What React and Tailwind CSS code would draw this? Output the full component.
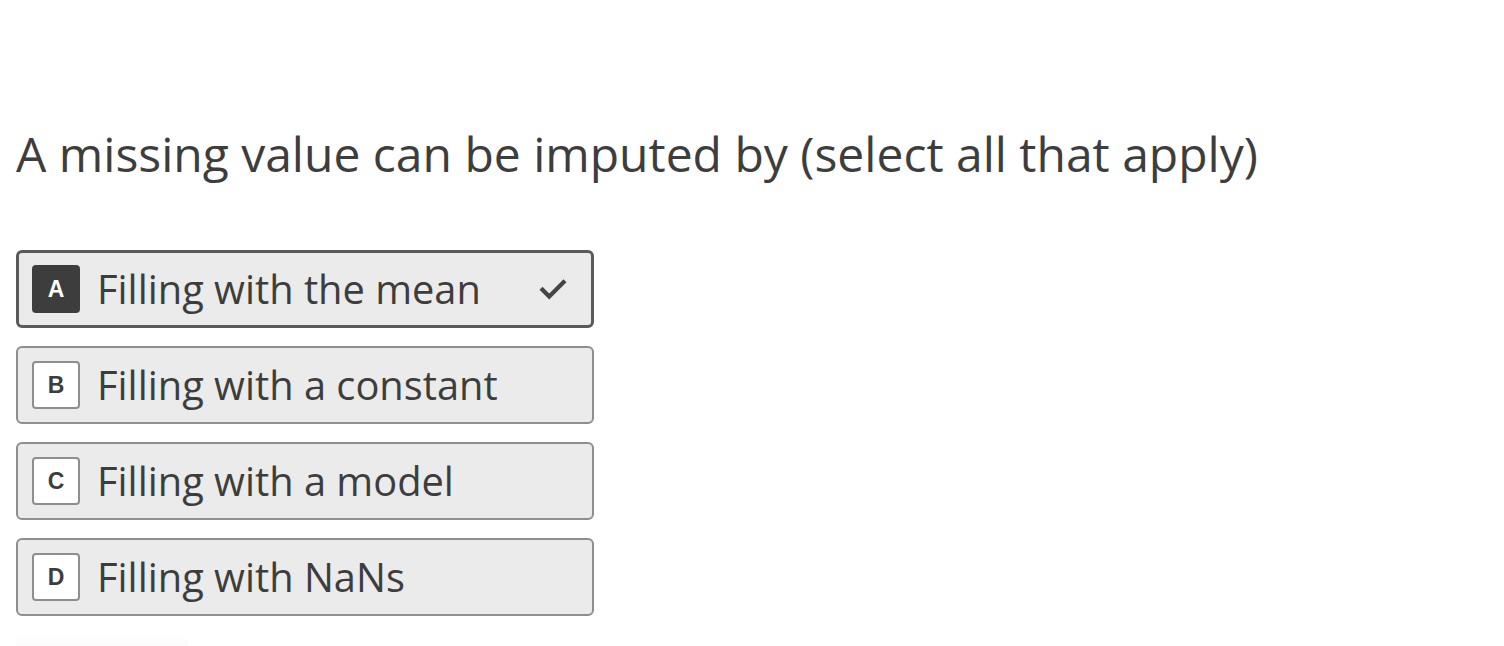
import React from "react";

const options = [
    { key: "A", label: "Filling with the mean", selected: true },
    { key: "B", label: "Filling with a constant" },
    { key: "C", label: "Filling with a model" },
    { key: "D", label: "Filling with NaNs" },
];

function Check() {
    return (
        <svg width="36" height="36" viewBox="0 0 24 24" fill="none" stroke="#444" strokeWidth="2.8" strokeLinecap="square">
            <path d="M5 12.5l4.5 4.5L19 7.5" />
        </svg>
    );
}

function Option({ opt }) {
    return (
        <div
            className={
                "flex items-center h-[78px] w-[578px] rounded-md bg-[#ebebeb] " +
                (opt.selected ? "border-[3px] border-[#5a5a5a] pl-[13px] pr-[20px]" : "border-2 border-[#8e8e8e] pl-[14px] pr-5")
            }
        >
            {opt.selected ? (
                <div className="flex items-center justify-center w-12 h-12 rounded bg-[#3d3d3d] text-white text-[23px] font-bold font-['Liberation_Sans',sans-serif]">
                    {opt.key}
                </div>
            ) : (
                <div className="flex items-center justify-center w-12 h-12 rounded bg-white border-2 border-[#8e8e8e] text-[#3d3d3d] text-[23px] font-bold font-['Liberation_Sans',sans-serif]">
                    {opt.key}
                </div>
            )}
            <span className="ml-[17px] text-[39.8px] text-[#3d3d3d] flex-1">{opt.label}</span>
            {opt.selected && <Check />}
        </div>
    );
}

export default function App() {
    return (
        <div className="min-h-screen bg-white font-['Open_Sans',sans-serif] px-4 pt-[118px] overflow-hidden">
            <h1 className="text-[48px] leading-[72px] text-[#3d3d3d] font-normal">
                A missing value can be imputed by (select all that apply)
            </h1>
            <div className="flex flex-col gap-[18px] mt-[60px]">
                {options.map((opt) => (
                    <Option key={opt.key} opt={opt} />
                ))}
            </div>
            <div className="mt-[18px] w-[172px] h-[30px] rounded-md bg-gradient-to-b from-white to-[#f4f4f4]"></div>
        </div>
    );
}
